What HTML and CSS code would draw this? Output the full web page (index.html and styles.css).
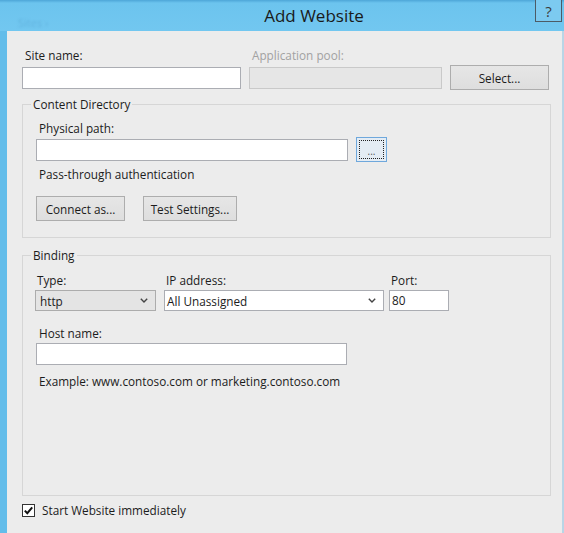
FILE: index.html
```html
<!DOCTYPE html>
<html>
<head>
<meta charset="utf-8">
<title>Add Website</title>
<link rel="stylesheet" href="styles.css">
</head>
<body>
<div class="window">
  <div class="titlebar">
    <span class="ghost">Sites &#8250;</span>
    <span class="title">Add Website</span>
    <span class="help">?</span>
  </div>
  <div class="client">
    <div class="toprow">
      <div class="lbl top-lbl">Site name:</div>
      <div class="lbl top-lbl dim">Application pool:</div>
      <div></div>
      <div class="input"></div>
      <div class="input disabled"></div>
      <button class="btn">Select...</button>
    </div>

    <fieldset class="group content-dir">
      <legend>Content Directory</legend>
      <div class="group-body">
        <div class="lbl in-lbl">Physical path:</div>
        <div class="path-row">
          <div class="input path"></div>
          <button class="btn browse"><span class="focus">...</span></button>
        </div>
        <div class="lbl in-lbl pass">Pass-through authentication</div>
        <div class="btn-row">
          <button class="btn connect">Connect as...</button>
          <button class="btn test">Test Settings...</button>
        </div>
      </div>
    </fieldset>

    <fieldset class="group binding">
      <legend>Binding</legend>
      <div class="group-body">
        <div class="bind-row">
          <div class="field type">
            <div class="lbl b-lbl">Type:</div>
            <div class="combo gray"><span>http</span>
              <svg class="chev" width="8" height="5" viewBox="0 0 8 5"><path d="M0.8 0.8 L4 4 L7.2 0.8" fill="none" stroke="#444" stroke-width="1.4"/></svg>
            </div>
          </div>
          <div class="field ip">
            <div class="lbl b-lbl">IP address:</div>
            <div class="combo white"><span>All Unassigned</span>
              <svg class="chev" width="8" height="5" viewBox="0 0 8 5"><path d="M0.8 0.8 L4 4 L7.2 0.8" fill="none" stroke="#444" stroke-width="1.4"/></svg>
            </div>
          </div>
          <div class="field port">
            <div class="lbl b-lbl">Port:</div>
            <div class="input port-input">80</div>
          </div>
        </div>
        <div class="lbl in-lbl host-lbl">Host name:</div>
        <div class="input host"></div>
        <div class="lbl in-lbl example">Example: www.contoso.com or marketing.contoso.com</div>
      </div>
    </fieldset>

    <div class="check-row">
      <span class="checkbox">
        <svg width="13" height="13" viewBox="0 0 13 13"><rect x="0.5" y="0.5" width="12" height="12" fill="#fff" stroke="#333"/><path d="M2.8 6.6 L5.3 9.2 L10.2 3.4" fill="none" stroke="#111" stroke-width="2"/></svg>
      </span>
      <span class="check-text">Start Website immediately</span>
    </div>
  </div>
</div>
</body>
</html>
```

FILE: styles.css
```css
html, body {
  margin: 0;
  padding: 0;
  background: #ececec;
}

body {
  font-family: "Open Sans", "Noto Sans", "Liberation Sans", sans-serif;
  font-size: 11.75px;
  color: #1c1c1c;
}

.window {
  width: 564px;
  height: 533px;
  display: flex;
  flex-direction: column;
  background: #63bdea;
  overflow: hidden;
}

.titlebar {
  height: 31px;
  flex: none;
  display: flex;
  align-items: flex-start;
  padding-right: 2px;
  background: linear-gradient(#4da6d8 0, #6cc4ee 3px, #72c7f0 100%);
}

.ghost {
  width: 60px;
  margin: 15px 0 0 18px;
  color: #62b4e0;
  font-size: 11px;
  filter: blur(1.2px);
}

.title {
  flex: 1;
  text-align: center;
  padding-left: 15px;
  font-size: 17px;
  line-height: 31px;
  color: #1a1a1a;
}

.help {
  width: 27px;
  height: 22px;
  box-sizing: border-box;
  border: 1px solid #4c5b66;
  border-top: 0;
  display: flex;
  align-items: center;
  justify-content: center;
  font-size: 15px;
  color: #3a3a3a;
  background: #7ccaf0;
}

.client {
  flex: 1;
  margin-left: 7px;
  border-right: 2px solid #b9d5e6;
  background: #ececec;
  padding: 16px 11px 0 15px;
}

.lbl {
  line-height: 16px;
  white-space: nowrap;
}

.top-lbl { padding-left: 3px; }
.in-lbl { padding-left: 3px; }
.b-lbl { padding-left: 2px; }

.dim { color: #a2a2a2; }

.toprow {
  display: grid;
  grid-template-columns: 219px 193px 99px;
  column-gap: 8px;
  row-gap: 2px;
  align-items: center;
}

.input {
  height: 22px;
  box-sizing: border-box;
  border: 1px solid #abadb3;
  background: #ffffff;
}

.input.disabled {
  background: #e6e6e6;
  border-color: #c9c9c9;
}

.btn {
  height: 25px;
  box-sizing: border-box;
  border: 1px solid #adadad;
  background: linear-gradient(#e6e6e6, #dedede);
  font: inherit;
  color: #1c1c1c;
  padding: 0;
}

.group {
  margin: 0;
  border: 1px solid #d6d6d6;
  padding: 8px 10px 16px 8px;
  min-width: 0;
}

.group legend {
  padding: 0 2px;
  line-height: 16px;
}

.content-dir { margin-top: 6px; }

.group-body { padding-left: 5px; }

.path-row {
  margin-top: 1px;
  height: 25px;
  display: flex;
  align-items: center;
}

.input.path { width: 312px; }

.browse {
  width: 31px;
  margin-left: 8px;
  border-color: #6fa8dc;
  background: #e4ecf4;
  padding: 2px;
  display: flex;
}

.browse .focus {
  flex: 1;
  border: 1px dotted #222;
  display: flex;
  align-items: flex-end;
  justify-content: center;
  font-size: 10px;
  line-height: 14px;
  color: #555;
}

.pass { margin-top: 4px; }

.btn-row {
  margin-top: 14px;
  display: flex;
  gap: 18px;
}

.connect { width: 89px; }
.test { width: 94px; }

.binding {
  margin-top: 9px;
  padding-top: 9px;
  padding-bottom: 106px;
}

.bind-row {
  display: flex;
  margin-left: -1px;
}

.field {
  display: flex;
  flex-direction: column;
  gap: 2px;
}

.field.type { width: 121px; }
.field.ip { width: 220px; margin-left: 8px; }
.field.port { width: 60px; margin-left: 5px; }

.combo {
  height: 21px;
  box-sizing: border-box;
  display: flex;
  align-items: center;
  justify-content: space-between;
  padding: 0 7px 0 4px;
}

.combo.gray {
  background: #e4e4e4;
  border: 1px solid #acacac;
}

.combo.white {
  background: #ffffff;
  border: 1px solid #abadb3;
  padding-left: 2px;
}

.chev { display: block; }

.port-input {
  height: 21px;
  line-height: 19px;
  padding-left: 2px;
}

.host-lbl { margin-top: 14px; }

.input.host {
  width: 311px;
  margin-top: 2px;
}

.example { margin-top: 8px; }

.check-row {
  margin-top: 6px;
  display: flex;
  align-items: center;
  line-height: 16px;
  gap: 7px;
}

.checkbox {
  width: 13px;
  height: 13px;
  display: block;
}

.checkbox svg { display: block; }
```
